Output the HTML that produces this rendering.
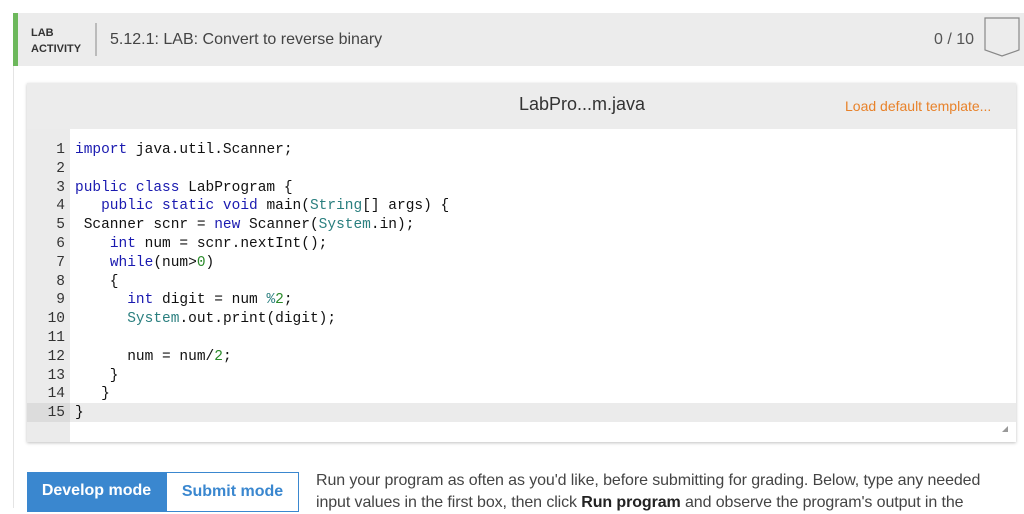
<!DOCTYPE html>
<html><head><meta charset="utf-8"><style>
body{margin:0;width:1024px;height:508px;overflow:hidden;background:#fff;font-family:"Liberation Sans",sans-serif;position:relative}
.abs{position:absolute}
.hdr{left:13px;top:13px;width:1011px;height:53px;background:#ececec;border-left:5px solid #6db85c;box-sizing:border-box}
.vline{left:13px;top:66px;width:1px;height:442px;background:#e4e4e4}
.ed{left:27px;top:83px;width:989px;height:359px;background:#fff;box-shadow:0 1px 3px rgba(0,0,0,.25)}
.edh{left:0;top:0;width:989px;height:46px;background:#ececec}
.gut{left:0;top:46px;width:43px;height:313px;background:#ebebeb}
.code{left:0;top:58px;font-family:"Liberation Mono",monospace;font-size:14.5px;line-height:18.8px;white-space:pre;color:#111}
.ln{display:inline-block;width:38px;text-align:right;color:#333;margin-right:10px}
.k{color:#1a1ab0}.t{color:#2a7f7f}.n{color:#2a8a2a}
.btn{top:472px;height:40px;font-weight:bold;font-size:16px;line-height:38px;text-align:center;box-sizing:border-box}
</style></head><body>
<div class="abs hdr"></div>
<div class="abs" style="left:31px;top:25px;font-size:11px;font-weight:bold;line-height:16px;color:#333">LAB<br>ACTIVITY</div>
<div class="abs" style="left:95px;top:23px;width:2px;height:33px;background:#bbb"></div>
<div class="abs" style="left:110px;top:31px;font-size:16px;color:#444">5.12.1: LAB: Convert to reverse binary</div>
<div class="abs" style="left:934px;top:31px;font-size:16px;color:#555">0 / 10</div>
<svg class="abs" style="left:984px;top:17px" width="36" height="42"><path d="M1 1H35V33L18 39L1 33Z" fill="none" stroke="#888" stroke-width="1.2"/></svg>
<div class="abs vline"></div>
<div class="abs ed">
<div class="abs edh"></div>
<div class="abs" style="left:0;top:11px;width:1110px;text-align:center;font-size:18px;color:#333">LabPro...m.java</div>
<div class="abs" style="left:818px;top:15px;font-size:14px;color:#e8822a">Load default template...</div>
<div class="abs gut"></div>
<div class="abs" style="left:43px;top:320px;width:946px;height:19px;background:#ebebeb"></div>
<div class="abs" style="left:0;top:320px;width:43px;height:19px;background:#dcdcdc"></div>
<div class="abs code"><span class="ln">1</span><span class="k">import</span> java.util.Scanner;
<span class="ln">2</span>
<span class="ln">3</span><span class="k">public class</span> LabProgram {
<span class="ln">4</span>   <span class="k">public static void</span> main(<span class="t">String</span>[] args) {
<span class="ln">5</span> Scanner scnr = <span class="k">new</span> Scanner(<span class="t">System</span>.in);
<span class="ln">6</span>    <span class="k">int</span> num = scnr.nextInt();
<span class="ln">7</span>    <span class="k">while</span>(num&gt;<span class="n">0</span>)
<span class="ln">8</span>    {
<span class="ln">9</span>      <span class="k">int</span> digit = num <span class="t">%</span><span class="n">2</span>;
<span class="ln">10</span>      <span class="t">System</span>.out.print(digit);
<span class="ln">11</span>
<span class="ln">12</span>      num = num/<span class="n">2</span>;
<span class="ln">13</span>    }
<span class="ln">14</span>   }
<span class="ln">15</span>}</div>
<div class="abs" style="left:975px;top:343px;width:0;height:0;border-left:6px solid transparent;border-bottom:6px solid #999"></div>
</div>
<div class="abs btn" style="left:27px;width:139px;background:#3a87cf;color:#fff">Develop mode</div>
<div class="abs btn" style="left:166px;width:133px;border:1px solid #3a87cf;color:#3a87cf">Submit mode</div>
<div class="abs" style="left:316px;top:470px;font-size:16px;line-height:22px;color:#444;width:700px;letter-spacing:-0.1px">Run your program as often as you'd like, before submitting for grading. Below, type any needed input values in the first box, then click <b style="color:#222">Run program</b> and observe the program's output in the</div>
</body></html>
